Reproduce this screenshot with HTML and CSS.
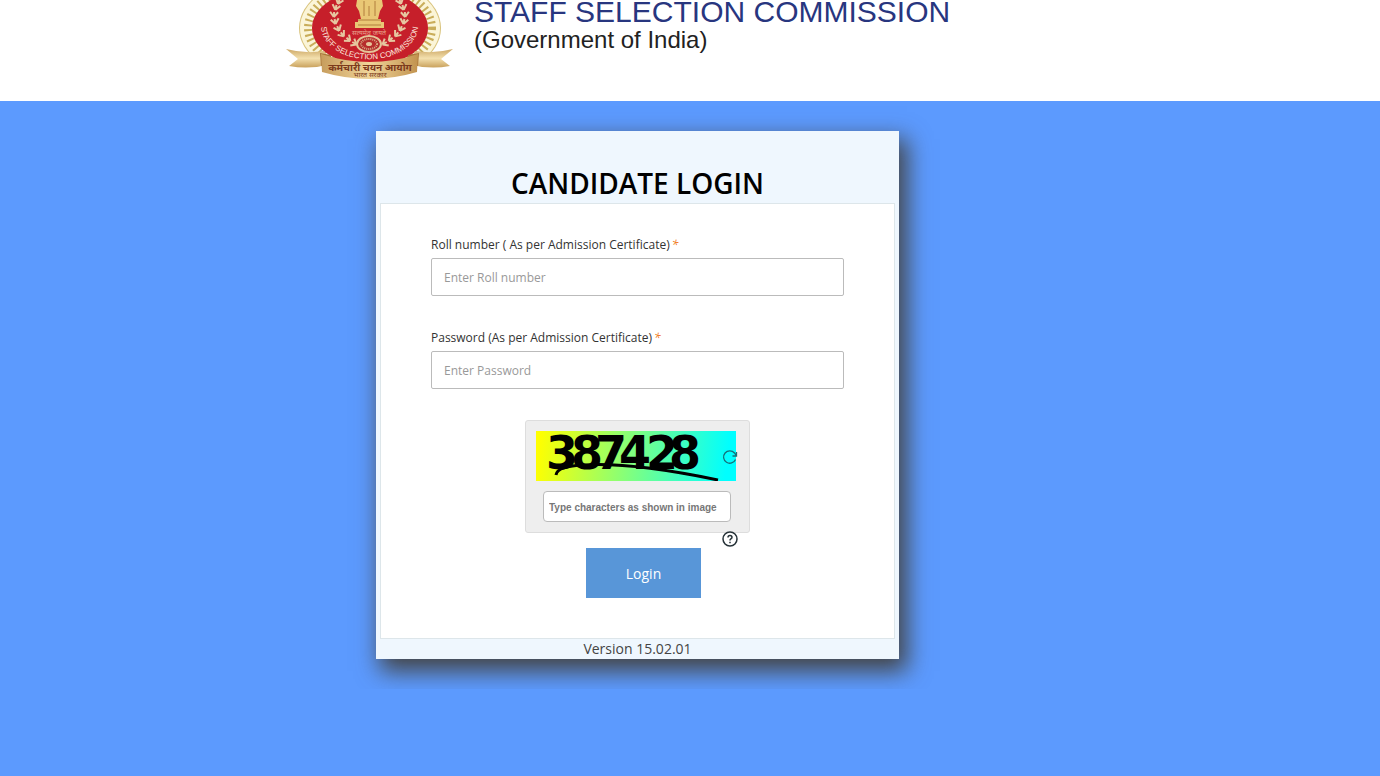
FILE: index.html
```
<!DOCTYPE html>
<html lang="en">
<head>
  <meta charset="UTF-8" />
  <meta name="viewport" content="width=device-width, initial-scale=1.0"/>
  <title>Candidate Login | Staff Selection Commission</title>
  <link rel="stylesheet" href="styles.css">
</head>
<body>
  <header class="header">
    <svg class="emblem" viewBox="0 0 180 84" role="img" aria-label="Staff Selection Commission emblem">
      <defs>
        <linearGradient id="gold" x1="0" x2="1" y1="0" y2="0">
          <stop offset="0" stop-color="#c79d5d"/>
          <stop offset="0.5" stop-color="#f0d59a"/>
          <stop offset="1" stop-color="#c2934f"/>
        </linearGradient>
        <linearGradient id="tail" x1="0" x2="0" y1="0" y2="1">
          <stop offset="0" stop-color="#cda765"/>
          <stop offset="0.5" stop-color="#f3e0ae"/>
          <stop offset="1" stop-color="#c9a15c"/>
        </linearGradient>
        <path id="ring" d="M41 26 A48 33 0 0 0 138 26"/>
        <path id="leaf" d="M0 3L-4 -2M0 3L4 -2M0 3V-2" fill="none" stroke="#e6c7a0" stroke-width="2"/>
        <g id="branch">
          <use href="#leaf" transform="translate(59 1) rotate(20)"/>
          <use href="#leaf" transform="translate(56 7) rotate(14)"/>
          <use href="#leaf" transform="translate(54 14) rotate(4)"/>
          <use href="#leaf" transform="translate(55 21) rotate(-10)"/>
          <use href="#leaf" transform="translate(58 28) rotate(-24)"/>
          <use href="#leaf" transform="translate(62 34) rotate(-38)"/>
          <use href="#leaf" transform="translate(68 39) rotate(-50)"/>
          <use href="#leaf" transform="translate(74 43) rotate(-60)"/>
        </g>
      </defs>
      <!-- outer ring -->
      <ellipse cx="90" cy="28" rx="71" ry="49" fill="#d9c37c"/>
      <ellipse cx="90" cy="28" rx="70" ry="48" fill="#fbf5d8"/>
      <ellipse cx="90" cy="28" rx="62" ry="41" fill="none" stroke="#c9ad5a" stroke-width="8" stroke-dasharray="2 3"/>
      <ellipse cx="90" cy="28" rx="58" ry="38" fill="#c61f2a"/>
      <!-- wreath -->
      <use href="#branch"/>
      <use href="#branch" transform="translate(179 0) scale(-1 1)"/>
      <!-- lion capital -->
      <path d="M77 0h25l1 6-3 5-2 8h3v3h3v6H75v-6h3v-3h3l-2-8-3-5z" fill="#e9c775"/>
      <path d="M84 1v15M95 1v15M89 6v10M78 20h23M78 25h23" fill="none" stroke="#b17e3e" stroke-width="1"/>
      <text x="89" y="35" class="emblem-motto">सत्यमेव जयते</text>
      <!-- wheel -->
      <ellipse cx="89" cy="44" rx="12" ry="8" fill="#b62d2c" stroke="#e5c59a" stroke-width="2"/>
      <ellipse cx="89" cy="44" rx="8" ry="5" fill="none" stroke="#d9ae86" stroke-width="2" stroke-dasharray="1 1"/>
      <ellipse cx="89" cy="44" rx="3" ry="2" fill="#e5c59a"/>
      <text class="emblem-name"><textPath href="#ring" startOffset="50%" text-anchor="middle">STAFF SELECTION COMMISSION</textPath></text>
      <!-- ribbon -->
      <path d="M6 49Q25 54 44 51L51 64Q30 70 9 66L18 59z" fill="url(#tail)"/>
      <path d="M173 49Q154 54 135 51L128 64Q149 70 170 66L161 59z" fill="url(#tail)"/>
      <path d="M40 53L51 55 51 64 41 66zM139 53L128 55 128 64 138 66z" fill="#a87539"/>
      <path d="M41 54Q90 70 138 54L137 72Q90 86 42 72z" fill="url(#gold)"/>
      <text x="90" y="71" class="emblem-hindi">कर्मचारी चयन आयोग</text>
      <text x="90" y="77" class="emblem-motto dark">भारत सरकार</text>
    </svg>
    <div class="titles">
      <div class="org">STAFF SELECTION COMMISSION</div>
      <div class="gov">(Government of India)</div>
    </div>
  </header>

  <main class="page">
    <div class="login-box">
      <h1>CANDIDATE LOGIN</h1>
      <form class="panel">
        <div class="field">
          <label for="roll">Roll number ( As per Admission Certificate)<span class="required">*</span></label>
          <input type="text" id="roll" placeholder="Enter Roll number" />
        </div>
        <div class="field">
          <label for="password">Password (As per Admission Certificate)<span class="required">*</span></label>
          <input type="password" id="password" placeholder="Enter Password" />
        </div>

        <div class="captcha">
          <svg class="captcha-image" viewBox="0 0 200 50" role="img" aria-label="Captcha">
            <defs>
              <linearGradient id="rainbow" gradientUnits="userSpaceOnUse" x1="4" y1="0" x2="192" y2="25">
                <stop offset="0" stop-color="#ffff00"/>
                <stop offset="1" stop-color="#00ffff"/>
              </linearGradient>
            </defs>
            <rect width="200" height="50" fill="url(#rainbow)"/>
            <text x="10 35 59 83 110 133" y="38" class="captcha-text">387428</text>
            <path d="M20 44Q21 35 48 34Q95 31 182 49" fill="none" stroke="#000" stroke-width="3"/>
          </svg>
          <button type="button" class="icon-btn refresh" aria-label="Refresh captcha">
            <svg viewBox="0 0 16 16"><path d="M13.5 10.5A6.2 6.2 0 1 1 12.5 4L14.5 7M14.5 3V7H10.5" fill="none" stroke="currentColor" stroke-width="1.3"/></svg>
          </button>
          <input type="text" class="captcha-input" aria-label="Captcha characters" placeholder="Type characters as shown in image" />
          <button type="button" class="icon-btn help" aria-label="Help">
            <svg viewBox="0 0 16 16"><circle cx="8" cy="8" r="7" fill="#fff" stroke="currentColor" stroke-width="1.5"/><path d="M6 6.5Q6 4.5 8 4.5T10 6.3Q10 7.4 8.6 8.1Q8 8.5 8 9.5M8 10.8V12.2" fill="none" stroke="currentColor" stroke-width="1.5"/></svg>
          </button>
        </div>

        <button type="submit" class="login-btn">Login</button>
      </form>
      <div class="version">Version 15.02.01</div>
    </div>
  </main>
</body>
</html>
```

FILE: styles.css
```
* {
  margin: 0;
  padding: 0;
  box-sizing: border-box;
}
body {
  font-family: "Open Sans", sans-serif;
  font-size: 14px;
  color: #444;
  background: #5c9afe;
}
.header {
  display: flex;
  align-items: flex-start;
  gap: 14px;
  padding: 0 20px 17px 280px;
  background: #fff;
}
.emblem {
  width: 180px;
  height: 84px;
  flex: none;
}
.emblem text {
  text-anchor: middle;
}
.emblem-name {
  font: 8px "Liberation Sans", sans-serif;
  fill: #fbe6dc;
}
.emblem-hindi {
  font: bold 10px "Noto Sans", sans-serif;
  fill: #7c3a1c;
}
.emblem-motto {
  font: 7px "Noto Sans", sans-serif;
  fill: #e9a58c;
}
.emblem-motto.dark {
  fill: #7c3a1c;
}
.titles {
  font-family: "Liberation Sans", Arial, sans-serif;
  white-space: nowrap;
}
.org {
  font-size: 30px;
  line-height: 24px;
  color: #28367f;
}
.gov {
  font-size: 24px;
  line-height: 32px;
  color: #222;
}
.page {
  display: grid;
  grid-template-columns: 376fr minmax(320px, 523fr) 481fr;
  padding: 30px 0;
}
.login-box {
  grid-column: 2;
  padding: 0 4px;
  background: #eff7fe;
  box-shadow: 6px 10px 22px 2px #444;
}
.login-box h1 {
  padding-top: 32px;
  font-size: 28px;
  font-weight: 600;
  line-height: 40px;
  text-align: center;
  color: #000;
}
.panel {
  display: flex;
  flex-direction: column;
  padding: 32px 50px 40px;
  background: #fff;
  border: 1px solid #dde6ea;
}
.field + .field {
  margin-top: 33px;
}
.field label {
  display: block;
  margin-bottom: 4px;
  font-size: 12px;
  line-height: 18px;
  color: #333;
}
.required {
  padding-left: 2px;
  font-style: italic;
  color: #f07818;
}
.field input {
  display: block;
  width: 100%;
  height: 38px;
  padding: 0 12px;
  font-family: inherit;
  font-size: 12px;
  border: 1px solid #bbb;
  border-radius: 2px;
}
.field input::placeholder {
  color: #999;
}
.captcha {
  position: relative;
  align-self: center;
  width: 225px;
  margin-top: 31px;
  padding: 10px;
  background: #eee;
  border: 1px solid #ddd;
  border-radius: 3px;
}
.captcha-image {
  display: block;
  width: 200px;
  height: 50px;
}
.captcha-text {
  font: bold 46px "DejaVu Sans", sans-serif;
}
.captcha-input {
  display: block;
  width: 188px;
  height: 31px;
  margin: 10px auto 0 7px;
  padding: 2px 5px 0;
  font: bold 10px "Liberation Sans", Arial, sans-serif;
  border: 1px solid #bbb;
  border-radius: 4px;
}
.captcha-input::placeholder {
  color: #777;
}
.icon-btn {
  position: absolute;
  width: 16px;
  height: 16px;
  background: none;
  border: none;
  cursor: pointer;
}
.icon-btn svg {
  display: block;
}
.refresh {
  top: 28px;
  right: 11px;
  color: #167078;
}
.help {
  right: 11px;
  bottom: -15px;
  color: #263238;
}
.login-btn {
  align-self: center;
  width: 115px;
  height: 50px;
  margin: 15px 0 0 12px;
  font-family: inherit;
  font-size: 14px;
  color: #fff;
  background: #5896d8;
  border: none;
  cursor: pointer;
}
.version {
  line-height: 20px;
  text-align: center;
}
@media (max-width: 768px) {
  .header {
    padding-left: 20px;
  }
  .titles {
    white-space: normal;
  }
  .page {
    grid-template-columns: 1fr minmax(320px, 523px) 1fr;
  }
}
```
